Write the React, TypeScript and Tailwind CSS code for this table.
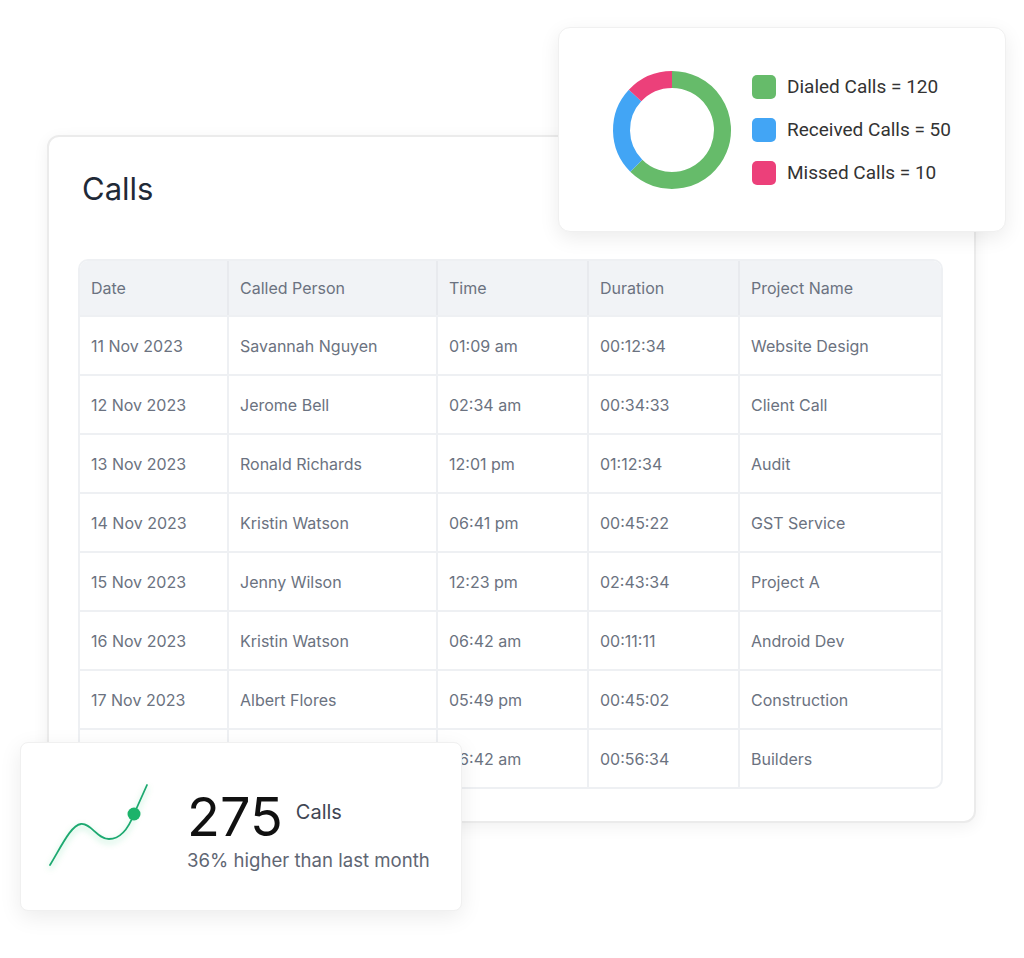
const rows = [
  ["11 Nov 2023", "Savannah Nguyen", "01:09 am", "00:12:34", "Website Design"],
  ["12 Nov 2023", "Jerome Bell", "02:34 am", "00:34:33", "Client Call"],
  ["13 Nov 2023", "Ronald Richards", "12:01 pm", "01:12:34", "Audit"],
  ["14 Nov 2023", "Kristin Watson", "06:41 pm", "00:45:22", "GST Service"],
  ["15 Nov 2023", "Jenny Wilson", "12:23 pm", "02:43:34", "Project A"],
  ["16 Nov 2023", "Kristin Watson", "06:42 am", "00:11:11", "Android Dev"],
  ["17 Nov 2023", "Albert Flores", "05:49 pm", "00:45:02", "Construction"],
  ["18 Nov 2023", "Jacob Jones", "06:42 am", "00:56:34", "Builders"],
]

const headers = ["Date", "Called Person", "Time", "Duration", "Project Name"]
const colWidths = ["w-[149px]", "w-[209px]", "w-[151px]", "w-[151px]", "flex-1"]

const legend = [
  { label: "Dialed Calls = 120", color: "bg-[#66bb6a]" },
  { label: "Received Calls = 50", color: "bg-[#42a5f5]" },
  { label: "Missed Calls = 10", color: "bg-[#ec407a]" },
]

// arc path on a ring, angles in degrees clockwise from 12 o'clock
function arc(cx: number, cy: number, r: number, a0: number, a1: number) {
  const p = (a: number) => {
    const rad = ((a - 90) * Math.PI) / 180
    return [cx + r * Math.cos(rad), cy + r * Math.sin(rad)]
  }
  const [x0, y0] = p(a0)
  const [x1, y1] = p(a1)
  const large = a1 - a0 > 180 ? 1 : 0
  return `M${x0} ${y0} A${r} ${r} 0 ${large} 1 ${x1} ${y1}`
}

function Donut() {
  return (
    <svg width="120" height="120" viewBox="0 0 120 120" className="shrink-0">
      <path d={arc(60, 60, 50.5, 0, 225)} stroke="#66bb6a" strokeWidth="17" fill="none" />
      <path d={arc(60, 60, 50.5, 225, 313)} stroke="#42a5f5" strokeWidth="17" fill="none" />
      <path d={arc(60, 60, 50.5, 313, 360)} stroke="#ec407a" strokeWidth="17" fill="none" />
    </svg>
  )
}

function Sparkline() {
  return (
    <svg width="130" height="100" viewBox="0 0 130 100" className="shrink-0 overflow-visible">
      <defs>
        <filter id="glow" x="-30%" y="-30%" width="160%" height="160%">
          <feDropShadow dx="0" dy="3" stdDeviation="3" floodColor="#22c55e" floodOpacity="0.35" />
        </filter>
      </defs>
      <path
        d="M9 92 C20 74 30 52 40 51 C50 50 56 66 68 66 C80 66 88 54 93 41 L106 12"
        stroke="#1fa971"
        strokeWidth="1.8"
        fill="none"
        strokeLinecap="round"
        filter="url(#glow)"
      />
      <circle cx="93" cy="41" r="6.5" fill="#1db36b" />
    </svg>
  )
}

export default function App() {
  return (
    <div className="relative w-[1024px] h-[958px] bg-white font-['Inter',sans-serif] overflow-hidden">
      <div className="pt-[135px] pl-[47px]">
        {/* main calls card */}
        <div className="w-[929px] h-[688px] rounded-xl border-2 border-[#ebebeb] bg-white shadow-[0_4px_16px_rgba(0,0,0,0.06)] pt-[33px] pl-[29px]">
          <h2 className="text-[31px] leading-[38px] text-[#1f2a37] pl-[4px]">Calls</h2>
          <div className="mt-[51px] w-[865px] rounded-[10px] border-2 border-[#eef0f3] overflow-hidden">
            <div className="flex h-[54px] bg-[#f1f3f6]">
              {headers.map((h, i) => (
                <div
                  key={h}
                  className={`${colWidths[i]} flex items-center pl-[11px] text-[16px] text-[#6b7280] ${i < 4 ? "border-r-2 border-[#e8eaee]" : ""}`}
                >
                  {h}
                </div>
              ))}
            </div>
            {rows.map((row, r) => (
              <div key={r} className="flex h-[59px] border-t-2 border-[#eef0f3]">
                {row.map((cell, i) => (
                  <div
                    key={i}
                    className={`${colWidths[i]} flex items-center pl-[11px] text-[16px] text-[#6b7280] ${i < 4 ? "border-r-2 border-[#eef0f3]" : ""}`}
                  >
                    {cell}
                  </div>
                ))}
              </div>
            ))}
          </div>
        </div>
      </div>

      {/* donut overlay card */}
      <div className="absolute left-[558px] top-[27px] w-[448px] h-[205px] rounded-xl bg-white border border-[#f0f0f0] shadow-[0_6px_20px_rgba(0,0,0,0.08)] flex items-center pl-[53px] pt-[1px]">
        <Donut />
        <div className="ml-[20px] flex flex-col gap-[19px] font-['Roboto',sans-serif]">
          {legend.map((l) => (
            <div key={l.label} className="flex items-center">
              <span className={`w-[24px] h-[24px] rounded-[5px] ${l.color}`} />
              <span className="ml-[11px] text-[19px] leading-[24px] text-[#333333]">{l.label}</span>
            </div>
          ))}
        </div>
      </div>

      {/* stats overlay card */}
      <div className="absolute left-[20px] top-[742px] w-[442px] h-[169px] rounded-lg bg-white border border-[#f0f0f0] shadow-[0_6px_22px_rgba(0,0,0,0.08)] flex items-start pl-[20px] pt-[30px]">
        <Sparkline />
        <div className="ml-[16px] pt-[16px]">
          <div className="flex items-start">
            <span className="text-[54px] leading-[56px] text-[#111111]">275</span>
            <span className="ml-[13px] mt-[8px] text-[20px] text-[#3f4654]">Calls</span>
          </div>
          <div className="mt-[2px] text-[18.6px] text-[#5f6673]">36% higher than last month</div>
        </div>
      </div>
    </div>
  )
}
